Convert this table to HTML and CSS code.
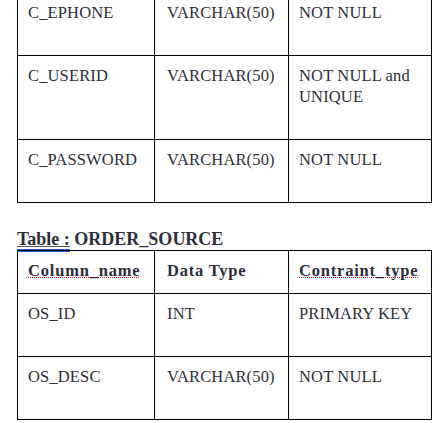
FILE: index.html
```html
<!DOCTYPE html>
<html>
<head>
<meta charset="utf-8">
<link rel="stylesheet" href="styles.css">
</head>
<body>
<div class="page">
  <div class="schema first" role="table">
    <div class="cell">C_EPHONE</div><div class="cell mid">VARCHAR(50)</div><div class="cell">NOT NULL</div>
    <div class="cell">C_USERID</div><div class="cell mid">VARCHAR(50)</div><div class="cell">NOT NULL and<br>UNIQUE</div>
    <div class="cell">C_PASSWORD</div><div class="cell mid">VARCHAR(50)</div><div class="cell">NOT NULL</div>
  </div>
  <h2 class="title"><span class="grammar">Table :</span> ORDER_SOURCE</h2>
  <div class="schema" role="table">
    <div class="cell head"><span class="spell">Column_name</span></div><div class="cell head mid">Data Type</div><div class="cell head"><span class="spell">Contraint_type</span></div>
    <div class="cell">OS_ID</div><div class="cell mid">INT</div><div class="cell">PRIMARY KEY</div>
    <div class="cell">OS_DESC</div><div class="cell mid">VARCHAR(50)</div><div class="cell">NOT NULL</div>
  </div>
</div>
</body>
</html>
```
FILE: styles.css
```css
html, body {
  margin: 0;
  padding: 0;
  background: #ffffff;
}

.page {
  padding-left: 17px;
  font-family: "Liberation Serif", serif;
  font-size: 16.5px;
  color: #2e2e38;
}

.schema {
  width: 415px;
  box-sizing: border-box;
  display: grid;
  grid-template-columns: 137px 134px 143px;
  border-left: 1px solid #000;
  border-top: 1px solid #000;
}

.first {
  margin-top: -8px;
}

.cell {
  box-sizing: border-box;
  border-right: 1px solid #000;
  border-bottom: 1px solid #000;
  line-height: 21px;
  padding: 9px 4px 32px 10px;
  letter-spacing: 0.15px;
}

.cell.mid {
  padding-left: 12px;
}

.cell.head {
  font-weight: bold;
  padding-bottom: 12px;
  letter-spacing: 0.8px;
}

.title {
  margin: 25px 0 0 0;
  font-size: 18px;
  line-height: 22px;
  font-weight: bold;
}

.grammar {
  text-decoration: underline;
  text-decoration-color: #555555;
  border-bottom: 3px double #2f55d4;
}

.spell {
  text-decoration-line: underline;
  text-decoration-style: dotted;
  text-decoration-color: #e02020;
  text-decoration-thickness: 1px;
}
```
